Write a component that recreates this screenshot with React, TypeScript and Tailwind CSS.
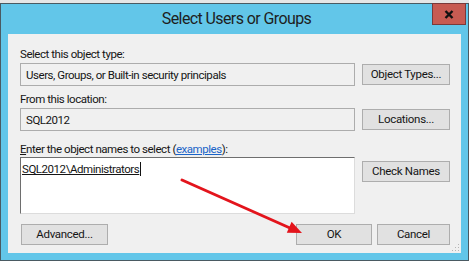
import React from 'react';

const font = { fontFamily: 'Roboto, "Noto Sans", sans-serif' };

const Btn: React.FC<{ label: string; className?: string }> = ({ label, className = '' }) => (
  <button
    className={`h-[21px] border border-[#adadad] bg-[#e1e1e1] text-[11.5px] leading-none tracking-[-0.3px] text-[#151515] ${className}`}
  >
    {label}
  </button>
);

export default function App() {
  return (
    <div className="h-[261px] w-[469px] bg-[#e6e6e6] pt-[3px] text-[#151515]" style={font}>
      <div className="flex h-[258px] flex-col border border-[#4a5a62] bg-[#62c6e9]">
        {/* title bar */}
        <div className="relative flex h-[30px] shrink-0 items-center justify-center">
          <span className="ml-[4px] text-[16px] leading-none tracking-[-0.6px] text-[#1e1e1e]">Select Users or Groups</span>
          <div className="absolute right-[2px] top-[-1px] flex h-[22px] w-[34px] items-center justify-center border border-[#7a3a3a] bg-[#c75b52]">
            <svg width="10" height="9" viewBox="0 0 10 9">
              <path d="M1.5 1 L8.5 8 M8.5 1 L1.5 8" stroke="#111" strokeWidth="2.4" />
            </svg>
          </div>
        </div>

        {/* content */}
        <div className="relative mx-[7px] mb-[7px] flex flex-1 flex-col bg-[#f0f0f0] pl-[12px] pr-[11px] pt-[13px] text-[11.5px] leading-[14px] tracking-[-0.45px]">
          <div>Select this object type:</div>
          <div className="mt-[2px] flex items-center gap-[7px]">
            <div className="flex h-[23px] flex-1 items-center border border-[#acacac] pl-[5px]">
              Users, Groups, or Built-in security principals
            </div>
            <Btn label="Object Types..." className="w-[88px]" />
          </div>

          <div className="mt-[6px]">From this location:</div>
          <div className="mt-[2px] flex items-center gap-[7px]">
            <div className="flex h-[23px] flex-1 items-center border border-[#acacac] pl-[5px]">SQL2012</div>
            <Btn label="Locations..." className="w-[88px]" />
          </div>

          <div className="mt-[11px]">
            <span className="underline">E</span>nter the object names to select (
            <span className="text-[#1a64c8] underline">examples</span>):
          </div>
          <div className="mt-[1px] flex items-start gap-[7px]">
            <div className="h-[57px] flex-1 border border-b-[#dcdcdc] border-l-[#6e6e6e] border-r-[#dcdcdc] border-t-[#6e6e6e] bg-white pl-[1px] pt-[4px]">
              <span className="border-r border-[#111] pr-[1px] underline">SQL2012\Administrators</span>
            </div>
            <Btn label="Check Names" className="mt-[4px] w-[88px]" />
          </div>

          <div className="mt-[10px] flex items-center">
            <Btn label="Advanced..." className="ml-[1px] w-[87px]" />
            <div className="flex-1" />
            <Btn label="OK" className="w-[76px]" />
            <Btn label="Cancel" className="ml-[5px] w-[73px]" />
          </div>

          {/* resize grip */}
          <svg className="absolute bottom-[1px] right-[1px]" width="8" height="8" viewBox="0 0 8 8">
            <g fill="#b5b5b5">
              <rect x="6" y="0" width="1" height="1" />
              <rect x="3" y="3" width="1" height="1" />
              <rect x="6" y="3" width="1" height="1" />
              <rect x="0" y="6" width="1" height="1" />
              <rect x="3" y="6" width="1" height="1" />
              <rect x="6" y="6" width="1" height="1" />
            </g>
          </svg>
        </div>
      </div>

      {/* red annotation arrow */}
      <svg className="pointer-events-none absolute left-0 top-0" width="469" height="261">
        <line x1="182" y1="180" x2="290" y2="228" stroke="#e3141c" strokeWidth="3" strokeLinecap="round" />
        <polygon points="302,233 286.8,232.8 291.6,221.8" fill="#e3141c" />
      </svg>
    </div>
  );
}
